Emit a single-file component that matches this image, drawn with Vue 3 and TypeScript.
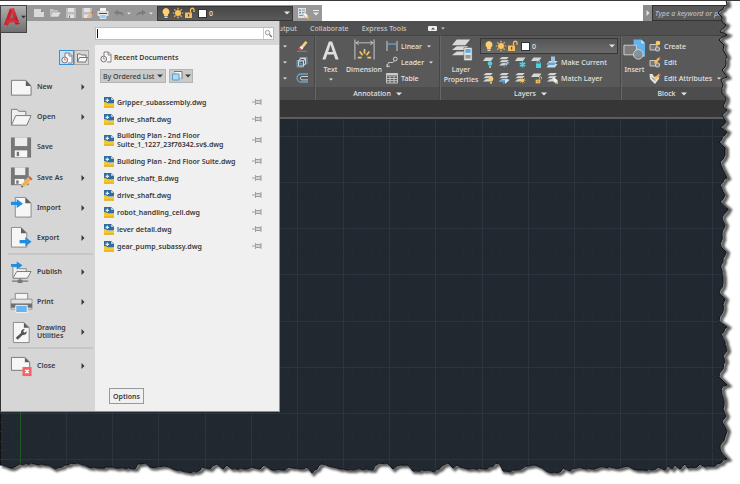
<script setup lang="ts">
import { ref } from 'vue'

interface MenuItem {
  label: string
  icon: string
  sub: boolean
}

const menuGroups: MenuItem[][] = [
  [
    { label: 'New', icon: 'm-new', sub: true },
    { label: 'Open', icon: 'm-open', sub: true },
    { label: 'Save', icon: 'm-save', sub: false },
    { label: 'Save As', icon: 'm-saveas', sub: true },
    { label: 'Import', icon: 'm-import', sub: true },
    { label: 'Export', icon: 'm-export', sub: true },
  ],
  [
    { label: 'Publish', icon: 'm-publish', sub: true },
    { label: 'Print', icon: 'm-print', sub: true },
    { label: 'Drawing Utilities', icon: 'm-utils', sub: true },
  ],
  [{ label: 'Close', icon: 'm-close', sub: true }],
]

const documents: string[] = [
  'Gripper_subassembly.dwg',
  'drive_shaft.dwg',
  'Building Plan - 2nd Floor Suite_1_1227_23f76342.sv$.dwg',
  'Building Plan - 2nd Floor Suite.dwg',
  'drive_shaft_B.dwg',
  'drive_shaft.dwg',
  'robot_handling_cell.dwg',
  'lever detail.dwg',
  'gear_pump_subassy.dwg',
]

const tabs: string[] = ['Output', 'Collaborate', 'Express Tools']
const fileTools: string[] = ['q-new', 'q-open', 'q-save', 'q-saveas', 'q-print']
const fileToolNames: string[] = ['New', 'Open', 'Save', 'Save As', 'Print']

const annotationTools = [
  { label: 'Linear', icon: 'r-linear', arrow: true },
  { label: 'Leader', icon: 'r-leader', arrow: true },
  { label: 'Table', icon: 'r-table', arrow: false },
]
const blockTools = [
  { label: 'Create', icon: 'r-create', arrow: false },
  { label: 'Edit', icon: 'r-edit', arrow: false },
  { label: 'Edit Attributes', icon: 'r-attr', arrow: true },
]
const layerRows = [
  { icons: ['l-off', 'l-iso', 'l-freeze', 'l-lock'], label: 'Make Current', icon: 'l-current' },
  { icons: ['l-on', 'l-uniso', 'l-thaw', 'l-unlock'], label: 'Match Layer', icon: 'l-match' },
]
const modifyIcons = ['r-erase', 'r-box', 'r-offset']

const menuSearch = ref('')
const helpSearch = ref('')

// Drawing grid: one major line every five minor ones
const minorStep = 9.23
const gridX = Array.from({ length: 80 }, (_, i) => ({
  pos: Math.round(20 + (i - 2) * minorStep),
  major: (i - 2) % 5 === 0,
}))
const gridY = Array.from({ length: 40 }, (_, i) => ({
  pos: Math.round(17 + (i - 1) * minorStep),
  major: (i - 1) % 5 === 0,
}))

// Torn paper edge, down the right side and then back along the bottom
const tear: number[][] = [
  [726, 0], [727, 5], [718, 13], [722, 17], [722, 22], [726, 25], [720, 32], [727, 35], [719, 40],
  [724, 45], [723, 50], [727, 57], [725, 67], [722, 70], [727, 77], [721, 80], [723, 85], [722, 93],
  [726, 98], [723, 107], [727, 110], [722, 115], [725, 120], [726, 122], [720, 127], [727, 132],
  [719, 142], [725, 148], [725, 155], [720, 162], [723, 170], [727, 178], [720, 185], [725, 195],
  [720, 202], [728, 209], [722, 218], [725, 225], [722, 235], [721, 247], [726, 252], [721, 265],
  [723, 277], [723, 283], [719, 293], [725, 299], [724, 302], [723, 311], [719, 321], [727, 327],
  [721, 334], [725, 342], [727, 351], [723, 356], [725, 362], [719, 377], [727, 385], [721, 389],
  [724, 401], [723, 409], [726, 416], [722, 421], [727, 431], [725, 437], [720, 446], [721, 452],
  [727, 459], [715, 466], [705, 467], [700, 464], [697, 467], [688, 468], [685, 464], [680, 469],
  [675, 465], [672, 469], [668, 466], [665, 470], [658, 467], [652, 470], [640, 470], [633, 469],
  [627, 466], [620, 468], [600, 467], [595, 469], [577, 468], [570, 471], [563, 468], [558, 473],
  [548, 472], [540, 467], [533, 465], [523, 468], [510, 472], [503, 471], [499, 463], [487, 469],
  [470, 469], [460, 467], [457, 465], [453, 468], [448, 463], [442, 466], [434, 472], [428, 470],
  [413, 471], [408, 465], [397, 466], [393, 469], [387, 463], [378, 464], [373, 470], [357, 469],
  [347, 470], [333, 467], [322, 464], [312, 473], [307, 467], [300, 469], [293, 468], [289, 467],
  [285, 470], [272, 470], [264, 465], [260, 469], [252, 467], [247, 469], [232, 469], [227, 465],
  [223, 469], [217, 464], [210, 469], [202, 467], [197, 472], [187, 472], [173, 469], [165, 466],
  [157, 467], [150, 467], [145, 463], [138, 464], [135, 469], [120, 468], [110, 467], [100, 468],
  [88, 467], [78, 463], [65, 465], [55, 469], [48, 465], [35, 464], [20, 464], [13, 468], [0, 465],
]

// Breaks each stretch of the tear into short ragged steps
function roughen(points: number[][]): string {
  const out: string[] = []
  points.forEach(([x, y], i) => {
    out.push(`${x} ${y}`)
    const next = points[i + 1]
    if (!next) return
    const steps = Math.floor(Math.hypot(next[0] - x, next[1] - y) / 3)
    for (let s = 1; s < steps; s++) {
      const t = s / steps
      const n = ((i * 7 + s * 13) % 5) / 2 - 1
      out.push(`${(x + (next[0] - x) * t + n * 0.6).toFixed(1)} ${(y + (next[1] - y) * t + n * 0.7).toFixed(1)}`)
    }
  })
  return 'M' + out.join('L')
}
const tearLine = roughen(tear)
const paper = tearLine + 'L-20 465L-20 500L760 500L760 -20L726 -20Z'
</script>

<template>
  <div class="page">
    <svg class="defs" aria-hidden="true">
      <defs>
        <linearGradient id="gRed" x1="0" y1="0" x2="1" y2="1">
          <stop offset="0" stop-color="#f0545c" /><stop offset="1" stop-color="#a80f1b" />
        </linearGradient>
        <symbol id="bulb" viewBox="0 0 10 12">
          <path d="M5 1a3.6 3.6 0 0 0-2 6.500V9h4V7.500A3.600 3.600 0 0 0 5 1z" fill="#ffcf70" />
          <path d="M3.500 9.500h3v1.500h-3z" fill="#d8d8d8" />
        </symbol>
        <symbol id="sun" viewBox="0 0 12 12">
          <circle cx="6" cy="6" r="3" fill="#fbc45c" />
          <path d="M6 .8v1.600M6 9.600v1.600M.8 6h1.600M9.600 6h1.600M2.300 2.300l1.200 1.200M8.500 8.500l1.200 1.200M2.300 9.700l1.200-1.200M8.500 3.500l1.200-1.200" stroke="#fbc45c" stroke-width="1.200" />
        </symbol>
        <symbol id="unlock" viewBox="0 0 12 12">
          <path d="M1 5.500h7V11H1z" fill="#f3bd5c" />
          <path d="M6.500 5.500V3a1.700 1.700 0 0 1 3.500 0v2" fill="none" stroke="#f3bd5c" stroke-width="1.300" />
          <path d="M4 7h1.200v2.500H4z" fill="#6b5528" />
        </symbol>
        <symbol id="down" viewBox="0 0 6 4"><path d="M0 .5h6L3 3.500z" fill="currentColor" /></symbol>
        <symbol id="right" viewBox="0 0 4 6"><path d="M.5 0v6l3-3z" fill="currentColor" /></symbol>
        <symbol id="sheets" viewBox="0 0 12 12">
          <path d="M3.500 3.500h8L9 7H1z" fill="#d6d6d6" />
        </symbol>
        <symbol id="stack" viewBox="0 0 12 12">
          <path d="M4 1h7L8.500 3.500H1zM4 4h7L8.500 6.500H1zM4 7h7L8.500 9.500H1z" fill="#d6d6d6" />
          <path d="M1 3.700h7.500L11 1.500M1 6.700h7.500L11 4.500" stroke="#555" stroke-width=".6" fill="none" />
        </symbol>

        <symbol id="q-new" viewBox="0 0 12 12"><path d="M1 2h7l3 3v5H1z" fill="#d9d9d9" /><path d="M8 2v3h3z" fill="#888" /></symbol>
        <symbol id="q-open" viewBox="0 0 12 12"><path d="M1 10V2h3l1 1h4v2" fill="#c2c2c2" /><path d="M1 10l2.500-5H12l-2.500 5z" fill="#dedede" stroke="#919191" stroke-width=".5" /></symbol>
        <symbol id="q-save" viewBox="0 0 12 12"><path d="M1 1h10v10H1z" fill="#bdbdbd" /><path d="M3 1h6v4H3zM3 7.500h6V11H3z" fill="#e3e3e3" /><path d="M4 8.500h1V11H4z" fill="#777" /></symbol>
        <symbol id="q-saveas" viewBox="0 0 12 12"><path d="M1 1h10v10H1z" fill="#bdbdbd" /><path d="M3 1h6v4H3zM3 7.500h5V11H3z" fill="#e3e3e3" /><path d="M6 11l.5-2L10 5.500l1.500 1.500L8 10.500z" fill="#f3b85f" /><path d="M10 5.500l1-1L12 6l-.7 1z" fill="#e85050" /></symbol>
        <symbol id="q-print" viewBox="0 0 12 12"><path d="M3 1h6v3H3z" fill="#f4f4f4" /><path d="M.5 4h11v5H.5z" fill="#dedede" /><path d="M2 6h8v1H2z" fill="#4d4d4d" /><path d="M3 7.500h6v4H3z" fill="#8fd0ff" stroke="#f2f2f2" stroke-width=".7" /></symbol>
        <symbol id="q-undo" viewBox="0 0 12 10"><path d="M1 4.500L5 1.500v2c3.500 0 5.500 1.500 6 4.500-1.500-1.500-3-2-6-2v1.700z" fill="#7c7c7c" /></symbol>
        <symbol id="q-match" viewBox="0 0 12 12"><path d="M1 1h8v10H1z" fill="#e0e0e0" /><path d="M2 2.500h2v1.500H2zM2 5h2v1.500H2z" fill="#4d9ed5" /><path d="M5 3h3M5 5.500h3M2 8.500h4" stroke="#7a7a7a" stroke-width=".8" /><path d="M5.500 6.500L8 5l3.500 4L9 11.500z" fill="#f2f2f2" stroke="#777" stroke-width=".4" /><path d="M9 11.500l2.500-2.500.5 3z" fill="#edba56" /></symbol>

        <symbol id="m-new" viewBox="0 0 24 24"><path d="M1.500 4.500h15l5.500 6v9.500H1.500z" fill="#f6f6f6" stroke="#777" /><path d="M16.500 4.500v6H22z" fill="#5e5e5e" /></symbol>
        <symbol id="m-open" viewBox="0 0 24 24"><path d="M1.500 20V3.500h6l1.500 2h7.500V10" fill="#f0f0f0" stroke="#777" /><path d="M1.500 20l4.500-10h16l-4.500 10z" fill="#f6f6f6" stroke="#777" /></symbol>
        <symbol id="m-save" viewBox="0 0 24 24"><path d="M1 1.500h21v21H1z" fill="#777" /><path d="M5 1.500h13v9H5z" fill="#ececec" /><path d="M5 15h13v7H5z" fill="#f6f6f6" /><path d="M7 16.500h2.500V21H7z" fill="#777" /></symbol>
        <symbol id="m-saveas" viewBox="0 0 24 24"><path d="M1 1.500h18.500v18.500H1z" fill="#777" /><path d="M5 1.500h11v8H5z" fill="#ececec" /><path d="M5 13.500h10V19H5z" fill="#f6f6f6" /><path d="M6.500 15H9v3.500H6.500z" fill="#777" /><path d="M11.500 22.500l1-4 6.500-6.500 3 3-6.500 6.500z" fill="#f0b04a" stroke="#e8e8e8" stroke-width=".6" /><path d="M19 12l1.500-1.500 3 3L22 15z" fill="#ef4f59" /><path d="M11.500 22.500l.7-2.500 1.800 1.800z" fill="#555" /></symbol>
        <symbol id="m-import" viewBox="0 0 24 24"><path d="M5.500 1.500h10.500l6 6v14.500H5.500z" fill="#f6f6f6" stroke="#888" /><path d="M16 1.500v6h6z" fill="#5e5e5e" /><path d="M1 6h6V3l6.500 5L7 12.500v-3H1z" fill="#1f8de0" /></symbol>
        <symbol id="m-export" viewBox="0 0 24 24"><path d="M1.500 1.500h10l6 6V22h-16z" fill="#f6f6f6" stroke="#888" /><path d="M11.500 1.500v6h6z" fill="#5e5e5e" /><path d="M10 14.500h6v-3l6.500 5-6.500 5v-3.500h-6z" fill="#1f8de0" /></symbol>
        <symbol id="m-publish" viewBox="0 0 24 24"><path d="M3 17V6h5l1.500 2H17v3" fill="#eee" stroke="#888" /><path d="M3 18l4-7h15l-4 7z" fill="#f6f6f6" stroke="#777" /><path d="M1 3h6V.5L13 4.500 7 9V6H1z" fill="#1f8de0" /><path d="M2 21h17M10.500 18v3" stroke="#777" stroke-width="1.400" /><path d="M8 19.500h5v3.500H8z" fill="#777" /></symbol>
        <symbol id="m-print" viewBox="0 0 24 24"><path d="M5.500 2.500h13V9h-13z" fill="#f6f6f6" stroke="#888" /><path d="M1 8.500h22V19H1z" fill="#e0e0e0" stroke="#888" stroke-width=".8" /><path d="M1 13h22v4.500H1z" fill="#6f6f6f" /><path d="M6 15h12v7.500H6z" fill="#6cb3ee" stroke="#f4f4f4" /></symbol>
        <symbol id="m-utils" viewBox="0 0 24 24"><path d="M3.500 1.500h11l5.500 5.500v15.500H3.500z" fill="#f6f6f6" stroke="#888" /><path d="M14.500 1.500V7H20z" fill="#5e5e5e" /><path d="M6 17.500l5.500-5a3.300 3.300 0 0 1 4-4l-1.800 2.300 1.500 1.500 2.300-1.500a3.300 3.300 0 0 1-4.300 3.700L8 19.500z" fill="#555" /></symbol>
        <symbol id="m-close" viewBox="0 0 24 24"><path d="M1.500 2.500h14l5 5V16h-19z" fill="#f6f6f6" stroke="#777" /><path d="M15.500 2.500v5h5z" fill="#5e5e5e" /><path d="M13 12.500h9.500V22H13z" fill="#f4636a" /><path d="M16 15.500l3.500 3.500M19.500 15.500L16 19" stroke="#fff" stroke-width="1.500" /></symbol>

        <symbol id="recent" viewBox="0 0 12 12"><path d="M4 5V1h4.500L11 3.500V11H7" fill="#f8f8f8" stroke="#777" stroke-width=".9" /><path d="M8 1v3h3" fill="none" stroke="#777" stroke-width=".9" /><circle cx="3.700" cy="8" r="2.900" fill="#f4f4f4" stroke="#777" /><path d="M3.700 6.200V8h1.600" fill="none" stroke="#d55" stroke-width=".8" /></symbol>
        <symbol id="folder" viewBox="0 0 12 12"><path d="M1.500 10V2h3l1 1H10v2" fill="#f2f2f2" stroke="#666" stroke-width=".9" /><path d="M1.500 10l2-4.500h8l-2 4.500z" fill="#f8f8f8" stroke="#666" stroke-width=".9" /></symbol>
        <symbol id="views" viewBox="0 0 12 12"><path d="M3 1.500h8V9" fill="#f4f4f4" stroke="#777" /><path d="M1.500 4h6.500v6H1.500z" fill="#aedcf7" stroke="#5b9cc4" /></symbol>
        <symbol id="glass" viewBox="0 0 10 10"><circle cx="4" cy="4" r="2.500" fill="#eef4f8" stroke="#9a9a9a" /><path d="M6 6l2.800 2.800" stroke="#777" stroke-width="1.500" /></symbol>
        <symbol id="dwg" viewBox="0 0 12 12"><path d="M1 1h7l3 3v3.500H1z" fill="#2d6da3" /><path d="M8 1v3h3z" fill="#dbe6ef" stroke="#557" stroke-width=".3" /><path d="M1 6c3 0 4 2 5.500 2S9 7.500 11 7.500v4H1z" fill="#f6c828" /><path d="M2.500 4.300h3.600M4.300 2.500v3.600" stroke="#dcebf7" stroke-width="1.200" /><path d="M1 10.700h10v.8H1z" fill="#c69612" /></symbol>
        <symbol id="pin" viewBox="0 0 10 8"><path d="M0 4h3M3.500 1v6M3.500 2.500h5v3h-5M9 1v6" fill="none" stroke="#a0a0a0" /><path d="M4 4h4.500" stroke="#bbb" /></symbol>

        <symbol id="r-erase" viewBox="0 0 12 12"><path d="M3.500 8L9.500 1l2 1.500-5.500 7z" fill="#f8cf83" /><path d="M3.500 8L5 6l2.300 2L6 9.800z" fill="#f6f6f6" /><path d="M2 8.500l1.500-1L6 9.500l-1.500 1z" fill="#e74d4d" /><path d="M1 11.300h10" stroke="#5f9fcc" stroke-width=".8" /></symbol>
        <symbol id="r-box" viewBox="0 0 12 12"><path d="M1 4.500h6.500V11H1zM4 1.500h7V8H4z" fill="none" stroke="#66a4cf" /><path d="M2.500 5h5v5h-5zM2.500 5l2-2.500h5l-2 2.500M9.500 2.500v5l-2 2.500" fill="none" stroke="#d7d7d7" /></symbol>
        <symbol id="r-offset" viewBox="0 0 12 12"><path d="M12 2H5a4 4 0 0 0 0 8h7" fill="none" stroke="#66a4cf" stroke-width="1.300" /><path d="M12 4.500H6a1.700 1.700 0 0 0 0 3.400h6" fill="none" stroke="#d0d0d0" /></symbol>
        <symbol id="r-text" viewBox="0 0 24 24"><path d="M3.500 22L10.300 3h3.400l6.800 19h-3.300l-1.800-5.300H8.600L6.800 22zM9.500 14h5L12 6.500z" fill="#dedede" /></symbol>
        <symbol id="r-dim" viewBox="0 0 24 24"><path d="M2 1v21M22 1v21" stroke="#cfcfcf" /><path d="M3 4.500h18M6 2.500l-3 2 3 2M18 2.500l3 2-3 2" fill="none" stroke="#cfcfcf" stroke-width=".9" /><path d="M5 20h4M15 20h4M7 13.500l3 4M17 13.500l-3 4M12 11v5" stroke="#f6c364" stroke-width="1.800" /></symbol>
        <symbol id="r-linear" viewBox="0 0 12 12"><path d="M1 1v10M11 1v10" stroke="#cfcfcf" /><path d="M1.500 4h9" stroke="#5aa9e0" stroke-width="1.300" /></symbol>
        <symbol id="r-leader" viewBox="0 0 12 12"><path d="M1 11l1.500-4.500H7L9 4M1 8v3l3-1" fill="none" stroke="#cfcfcf" stroke-width=".9" /><circle cx="9.300" cy="3" r="1.900" fill="none" stroke="#cfcfcf" /></symbol>
        <symbol id="r-table" viewBox="0 0 12 12"><path d="M.5 1.500h11v9.500H.5zM.5 4h11M.5 6.500h11M.5 8.700h11M4 4v7M8 4v7" fill="none" stroke="#cfcfcf" stroke-width=".9" /><path d="M.5 1.500h11V3H.5z" fill="#cfcfcf" /></symbol>
        <symbol id="r-layers" viewBox="0 0 24 24"><path d="M7 1h14l-5 6H2zM7 8h12l-4 4H2zM7 13.500h10l-3 4H2z" fill="#d9d9d9" /><path d="M14.500 9.500h8.500V23h-8.500z" fill="#e8e8e8" stroke="#666" stroke-width=".6" /><path d="M16 11h5.500v4H16z" fill="#58aee8" /><path d="M16 17h5.500v4H16z" fill="#999" /></symbol>
        <symbol id="l-off" viewBox="0 0 12 12"><use href="#sheets" y="-2" width="12" height="12" /><circle cx="8" cy="7.500" r="2.300" fill="#4ed0e0" /><path d="M7.300 10h1.500v2H7.300z" fill="#d0d0d0" /></symbol>
        <symbol id="l-iso" viewBox="0 0 12 12"><use href="#stack" width="12" height="12" /><path d="M5 11l5.500-6 1.500 1.500-5.500 5z" fill="#4b86b5" /><path d="M8 9l2-3" stroke="#e6e6e6" /></symbol>
        <symbol id="l-uniso" viewBox="0 0 12 12"><use href="#stack" width="12" height="12" /><path d="M1 9h6M5 11.500l4-5" stroke="#4b9bd5" stroke-width="1.400" /><path d="M7 12V7l4.500 1z" fill="#e1e1e1" /></symbol>
        <symbol id="l-freeze" viewBox="0 0 12 12"><use href="#sheets" y="-2" width="12" height="12" /><path d="M8.500 5.500v6M5.800 7l5.400 3M5.800 10l5.400-3" stroke="#4ed0e0" stroke-width="1.500" /></symbol>
        <symbol id="l-lock" viewBox="0 0 12 12"><use href="#sheets" y="-2" width="12" height="12" /><path d="M6 7.500h5V12H6z" fill="#4ed0e0" /><path d="M7 7.500V6.500a1.500 1.500 0 0 1 3 0v1" fill="none" stroke="#4ed0e0" /></symbol>
        <symbol id="l-current" viewBox="0 0 12 12"><path d="M3 5h8.500L9 8.500H.5zM3 8h8.500L9 11.500H.5z" fill="#d6d6d6" /><path d="M2 6.500h8l-1.500 2.500h-7z" fill="#58a8e0" /><path d="M5 .5h4v4l-2 2-2-2z" fill="#9bc3e0" /></symbol>
        <symbol id="l-on" viewBox="0 0 12 12"><use href="#stack" width="12" height="12" /><circle cx="9" cy="7" r="2.400" fill="#ffcb62" /><path d="M8.300 9.700h1.500v2H8.300z" fill="#e0e0e0" /></symbol>
        <symbol id="l-thaw" viewBox="0 0 12 12"><use href="#stack" width="12" height="12" /><use href="#sun" x="5" y="5" width="7" height="7" /></symbol>
        <symbol id="l-unlock" viewBox="0 0 12 12"><use href="#sheets" y="-2" width="12" height="12" /><use href="#unlock" x="5" y="4" width="8" height="8" /></symbol>
        <symbol id="l-match" viewBox="0 0 12 12"><use href="#stack" width="12" height="12" /><path d="M6 7l2-2 4 4-2.500 2.500z" fill="#eee" /><path d="M9.500 11.500L12 9v3z" fill="#f0b850" /></symbol>
        <symbol id="r-insert" viewBox="0 0 24 24"><path d="M11 1h8l4 4v14H11z" fill="#5fb6ee" /><path d="M19 1v4h4z" fill="#c6e6fa" /><path d="M1 7h13v10H1z" fill="#7c7c7c" stroke="#cfcfcf" /><circle cx="16" cy="16.500" r="5" fill="#8a8a8a" fill-opacity=".8" stroke="#d5d5d5" /></symbol>
        <symbol id="r-create" viewBox="0 0 12 12"><path d="M1 4.500h7V10H1z" fill="#777" stroke="#d5d5d5" stroke-width=".9" /><circle cx="8.500" cy="9" r="2.200" fill="#8a8a8a" stroke="#d5d5d5" stroke-width=".9" /><circle cx="9" cy="3" r="2.300" fill="#ffc95e" /></symbol>
        <symbol id="r-edit" viewBox="0 0 12 12"><path d="M1 4.500h7V10H1z" fill="#777" stroke="#d5d5d5" stroke-width=".9" /><circle cx="8.500" cy="9" r="2.200" fill="#8a8a8a" stroke="#d5d5d5" stroke-width=".9" /><path d="M5 7.500l.5-2L9.500 1.500l1.500 1.500-4 4z" fill="#f5bd5b" /><path d="M9.500 1.500L10.500.5 12 2l-1 1z" fill="#ef4f59" /></symbol>
        <symbol id="r-attr" viewBox="0 0 12 12"><path d="M.5 2h3l1.500 3L8 4l2.500 2-4.500 6L1 7z" fill="#e4e4e4" /><path d="M3 5.500l3 3" stroke="#666" /><path d="M5 8l.5-2L9.500 2l1.500 1.500-4 4z" fill="#f5bd5b" /><path d="M9.500 2l1-1L12 2.500l-1 1z" fill="#ef4f59" /></symbol>
      </defs>
    </svg>

    <header class="titlebar">
      <div class="quick">
        <button v-for="(t, i) in fileTools" :key="t" class="tool" :aria-label="fileToolNames[i]">
          <svg class="i12"><use :href="'#' + t" /></svg>
        </button>
        <button class="tool" aria-label="Undo"><svg class="i12"><use href="#q-undo" /></svg></button>
        <button class="drop" aria-label="Undo history"><svg class="arrow small"><use href="#down" /></svg></button>
        <button class="tool flip" aria-label="Redo"><svg class="i12"><use href="#q-undo" /></svg></button>
        <button class="drop" aria-label="Redo history"><svg class="arrow small"><use href="#down" /></svg></button>
        <label class="layerbox quickbox">
          <svg class="i12"><use href="#bulb" /></svg>
          <svg class="i12"><use href="#sun" /></svg>
          <svg class="i12"><use href="#unlock" /></svg>
          <span class="swatch"></span>
          <select aria-label="Current layer"><option>0</option></select>
          <svg class="arrow"><use href="#down" /></svg>
        </label>
        <button class="tool" aria-label="Match Properties"><svg class="i12"><use href="#q-match" /></svg></button>
        <button class="custom" aria-label="Customize"><span></span><svg class="arrow"><use href="#down" /></svg></button>
      </div>
      <div class="help">
        <button aria-label="Expand search"><svg class="caret"><use href="#right" /></svg></button>
        <input v-model="helpSearch" type="text" aria-label="Search help" placeholder="Type a keyword or phrase" />
      </div>
    </header>

    <nav class="tabs">
      <a v-for="t in tabs" :key="t" href="#">{{ t }}</a>
      <button class="ribbontoggle" aria-label="Minimize ribbon"><span><svg class="arrow tiny"><use href="#down" /></svg></span><svg class="arrow small"><use href="#down" /></svg></button>
    </nav>

    <section class="ribbon">
      <div class="panel modify">
        <div class="body">
          <div class="col">
            <button v-for="m in modifyIcons" :key="m" class="row" :aria-label="m.slice(2)">
              <svg class="arrow small"><use href="#down" /></svg>
              <svg class="i12"><use :href="'#' + m" /></svg>
            </button>
          </div>
        </div>
        <div class="title"></div>
      </div>
      <div class="panel annotation">
        <div class="body">
          <button class="big text"><svg><use href="#r-text" /></svg><span>Text</span><svg class="arrow small"><use href="#down" /></svg></button>
          <button class="big"><svg><use href="#r-dim" /></svg><span>Dimension</span></button>
          <div class="col">
            <button v-for="t in annotationTools" :key="t.label" class="row">
              <svg class="i12"><use :href="'#' + t.icon" /></svg>{{ t.label }}
              <svg v-if="t.arrow" class="arrow small"><use href="#down" /></svg>
            </button>
          </div>
        </div>
        <button class="title">Annotation<svg class="arrow"><use href="#down" /></svg></button>
      </div>
      <div class="panel layers">
        <div class="body">
          <button class="big props"><svg><use href="#r-layers" /></svg><span>Layer Properties</span></button>
          <div class="col grow">
            <label class="layerbox">
              <svg class="i12"><use href="#bulb" /></svg>
              <svg class="i12"><use href="#sun" /></svg>
              <svg class="i12"><use href="#unlock" /></svg>
              <span class="swatch"></span>
              <select aria-label="Layer"><option>0</option></select>
              <svg class="arrow"><use href="#down" /></svg>
            </label>
            <div v-for="r in layerRows" :key="r.label" class="row tools">
              <button v-for="i in r.icons" :key="i" :aria-label="i.slice(2)"><svg class="i12"><use :href="'#' + i" /></svg></button>
              <button class="row"><svg class="i12"><use :href="'#' + r.icon" /></svg>{{ r.label }}</button>
            </div>
          </div>
        </div>
        <button class="title">Layers<svg class="arrow"><use href="#down" /></svg></button>
      </div>
      <div class="panel block">
        <div class="body">
          <button class="big"><svg><use href="#r-insert" /></svg><span>Insert</span></button>
          <div class="col">
            <button v-for="t in blockTools" :key="t.label" class="row">
              <svg class="i12"><use :href="'#' + t.icon" /></svg>{{ t.label }}
              <svg v-if="t.arrow" class="arrow small"><use href="#down" /></svg>
            </button>
          </div>
        </div>
        <button class="title">Block<svg class="arrow"><use href="#down" /></svg></button>
      </div>
    </section>

    <div class="filetabs"></div>

    <main class="canvas">
      <svg class="grid" aria-hidden="true">
        <rect v-for="g in gridX" :key="'x' + g.pos" :x="g.pos" y="0" width="1" height="100%" :fill="g.major ? '#2c3440' : '#232a33'" />
        <rect v-for="g in gridY" :key="'y' + g.pos" x="0" :y="g.pos" width="100%" height="1" :fill="g.major ? '#2c3440' : '#232a33'" />
        <rect x="20" y="0" width="1" height="100%" fill="#1f5a25" />
      </svg>
    </main>

    <aside class="appmenu">
      <div class="left">
        <div class="toggles">
          <button class="on" aria-label="Recent Documents"><svg class="i12"><use href="#recent" /></svg></button>
          <button aria-label="Open Documents"><svg class="i12"><use href="#folder" /></svg></button>
        </div>
        <div v-for="(g, gi) in menuGroups" :key="gi" class="group" :class="'g' + g.length">
          <button v-for="m in g" :key="m.label" class="item">
            <svg class="i24"><use :href="'#' + m.icon" /></svg>
            <span>{{ m.label }}</span>
            <svg v-if="m.sub" class="caret"><use href="#right" /></svg>
          </button>
        </div>
      </div>
      <div class="rightcol">
        <div class="search">
          <span class="cursor"></span>
          <input v-model="menuSearch" type="text" aria-label="Search commands" />
          <button aria-label="Search"><svg class="i10"><use href="#glass" /></svg></button>
        </div>
        <div class="docs">
          <h2><svg class="i12"><use href="#recent" /></svg>Recent Documents</h2>
          <div class="filters">
            <label class="picker">
              <select aria-label="Sort order"><option>By Ordered List</option></select>
              <svg class="arrow"><use href="#down" /></svg>
            </label>
            <button class="picker" aria-label="Icon size"><svg class="i12"><use href="#views" /></svg><svg class="arrow"><use href="#down" /></svg></button>
          </div>
          <ul>
            <li v-for="(d, i) in documents" :key="i">
              <svg class="i12"><use href="#dwg" /></svg>
              <a href="#">{{ d }}</a>
              <button aria-label="Pin"><svg class="pin"><use href="#pin" /></svg></button>
            </li>
          </ul>
          <button class="options">Options</button>
        </div>
      </div>
    </aside>

    <button class="appbutton" aria-label="Application menu">
      <svg class="logo" viewBox="0 0 18 20">
        <path d="M1 18L7 1.500l4-.5 5.500 16-4 .8-1.300-3.500-5 .8L5 18.500z" fill="url(#gRed)" />
        <path d="M7 11l1.800-5.500L10.500 11z" fill="#777" />
        <path d="M7 1.500L9 4 5 15.500l-4 2.500z" fill="#c8202c" />
        <path d="M3 14c5-2.500 9-2 13 1l.5 2c-4-2.500-8-2.500-12 0z" fill="#d9303b" />
      </svg>
      <svg class="arrow"><use href="#down" /></svg>
    </button>

    <svg class="torn" viewBox="0 0 740 484" preserveAspectRatio="none" aria-hidden="true">
      <defs>
        <clipPath id="outside"><path :d="paper" /></clipPath>
        <filter id="soft" x="-5%" y="-5%" width="110%" height="110%"><feGaussianBlur stdDeviation="0.9" /></filter>
      </defs>
      <path :d="paper" fill="#fff" />
      <g clip-path="url(#outside)">
        <path :d="tearLine" fill="none" stroke="#5a5a5a" stroke-width="4" transform="translate(2 1)" filter="url(#soft)" />
      </g>
      <path :d="tearLine" fill="none" stroke="#0d0f12" stroke-width="1" />
    </svg>
  </div>
</template>

<style>
body {
  background: #fff;
}
</style>

<style scoped>
.page {
  position: relative;
  display: flex;
  flex-direction: column;
  min-height: 100vh;
  box-sizing: border-box;
  border-top: 1px solid #3a3a3a;
  overflow: hidden;
  font: 500 7px/9px "Noto Sans", "Open Sans", sans-serif;
  color: #e4e4e4;
  background: #fff;
}
.defs {
  position: absolute;
  width: 0;
  height: 0;
}
button,
input,
select {
  font: inherit;
  color: inherit;
  background: none;
  border: 0;
  margin: 0;
  padding: 0;
  outline: 0;
  border-radius: 0;
}
button {
  display: flex;
  align-items: center;
}
select {
  appearance: none;
  flex: 1;
  min-width: 0;
}
a {
  color: inherit;
  text-decoration: none;
}
svg {
  flex: none;
  display: block;
}
.i10 { width: 9px; height: 9px; }
.i12 { width: 12px; height: 12px; }
.i24 { width: 23px; height: 23px; }
.arrow { width: 6px; height: 4px; }
.arrow.small { width: 4px; height: 3px; }
.arrow.tiny { width: 4px; height: 3px; transform: rotate(180deg); }
.caret { width: 4px; height: 6px; }

.titlebar {
  display: flex;
  justify-content: space-between;
  height: 20px;
  box-sizing: border-box;
  padding-top: 4px;
}
.quick {
  display: flex;
  align-items: center;
  gap: 4px;
  width: 322px;
  box-sizing: border-box;
  padding: 0 3px 0 33px;
  background: #989898;
  color: #e8e8e8;
}
.flip svg { transform: scaleX(-1); }
.drop { margin-left: -2px; }
.layerbox {
  display: flex;
  align-items: center;
  height: 16px;
  box-sizing: border-box;
  padding: 0 2px;
  border: 1px solid #383838;
  background: linear-gradient(#555, #6a6a6a);
}
.quickbox {
  flex: 1;
  height: 15px;
  background: linear-gradient(#474747, #5a5a5a);
}
.swatch {
  width: 9px;
  height: 9px;
  margin: 0 2px 0 2px;
  background: #fff;
  outline: 1px solid #333;
  outline-offset: -1px;
}
.custom {
  flex-direction: column;
  gap: 1px;
}
.custom span {
  width: 6px;
  height: 1px;
  background: #eee;
}
.help {
  display: flex;
  width: 97px;
}
.help button {
  justify-content: center;
  width: 9px;
  background: #8c8c8c;
}
.help input {
  flex: 1;
  min-width: 0;
  padding-left: 2px;
  border: 1px solid #333;
  background: #595959;
}
.help input::placeholder {
  color: #bdbdbd;
  font-style: italic;
  opacity: 1;
}

.tabs {
  display: flex;
  align-items: center;
  gap: 13px;
  height: 14px;
  padding-left: 273px;
  background: #505050;
  color: #c8c8c8;
}
.ribbontoggle {
  gap: 4px;
  margin-left: 9px;
}
.ribbontoggle span {
  display: flex;
  justify-content: center;
  align-items: center;
  width: 9px;
  height: 5px;
  background: #eee;
  color: #444;
  border-radius: 1px;
}
.ribbon {
  display: flex;
  height: 65px;
  background: #474747;
  gap: 1px;
}
.panel {
  display: flex;
  flex-direction: column;
  box-sizing: border-box;
  background: #595959;
  border-top: 1px solid #434343;
  border-left: 1px solid #676767;
}
.body {
  display: flex;
  flex: 1;
  gap: 4px;
  padding-top: 2px;
}
.title {
  display: flex;
  justify-content: center;
  align-items: center;
  gap: 5px;
  height: 13px;
  background: #4d4d4d;
}
.modify { width: 314px; }
.modify .body { justify-content: flex-end; padding-right: 6px; }
.modify .row { gap: 9px; }
.annotation { width: 124px; }
.annotation .body { padding-left: 3px; }
.layers { width: 180px; }
.layers .body { padding: 2px 2px 0 1px; gap: 0; }
.block { flex: 1; }
.block .body { padding-left: 1px; gap: 3px; }
.block .title { padding-right: 18px; }
.big {
  flex-direction: column;
  gap: 3px;
  line-height: 10px;
}
.big svg:first-child {
  width: 23px;
  height: 24px;
}
.big.props { width: 38px; }
.col {
  display: flex;
  flex-direction: column;
}
.grow { flex: 1; min-width: 0; }
.row {
  display: flex;
  align-items: center;
  gap: 3px;
  height: 16px;
  white-space: nowrap;
}
.row .small { margin-left: 2px; }
.tools { gap: 4px; padding-left: 2px; }
.filetabs {
  height: 17px;
  background: #363636;
  border-bottom: 2px solid #5c5c5c;
}
.canvas {
  flex: 1;
  display: flex;
  background: #212830;
  border-left: 1px solid #111;
}
.grid {
  width: 100%;
  height: auto;
  margin-left: -1px;
}

.appmenu {
  position: absolute;
  top: 20px;
  left: 0;
  display: flex;
  width: 280px;
  height: 391px;
  box-sizing: border-box;
  border: solid #8f8f8f;
  border-width: 0 1px 1px 0;
  border-left: 1px solid #333;
  background: #d6d6d6;
  color: #3a3a3a;
  font-weight: 600;
}
.left {
  display: flex;
  flex-direction: column;
  width: 94px;
  box-sizing: border-box;
  padding-top: 29px;
}
.toggles {
  display: flex;
  justify-content: flex-end;
  padding: 0 6px 7px 0;
}
.toggles button {
  width: 15px;
  height: 15px;
  box-sizing: border-box;
  justify-content: center;
  border: 1px solid #a5a5a5;
}
.toggles .on {
  border-color: #3d8fd4;
  background: #c4e2f8;
}
.group {
  display: grid;
  grid-auto-rows: 1fr;
  min-height: 30px;
  margin: 0 2px 0 7px;
}
.group + .group {
  border-top: 2px solid #c6c6c6;
  padding-top: 2px;
}
.g6 { min-height: 181px; }
.g3 { min-height: 90px; }
.item {
  gap: 4px;
  padding: 0 8px 0 2px;
  text-align: left;
  line-height: 8px;
}
.item span { flex: 1; width: 38px; }
.rightcol {
  flex: 1;
  display: flex;
  flex-direction: column;
  min-width: 0;
}
.search {
  display: flex;
  align-items: center;
  height: 13px;
  box-sizing: border-box;
  margin: 6px 5px 5px 0;
  border: 1px solid #bcbcbc;
  background: #fff;
}
.search input { flex: 1; min-width: 0; }
.search button {
  border-left: 1px solid #ccc;
  height: 11px;
}
.cursor {
  width: 1px;
  height: 9px;
  margin-left: 1px;
  background: #111;
}
.docs {
  flex: 1;
  display: flex;
  flex-direction: column;
  padding: 6px 5px 7px 5px;
  background: #f0f0f0;
}
h2 {
  display: flex;
  align-items: center;
  gap: 2px;
  height: 12px;
  margin: 0;
  font: inherit;
}
.filters {
  display: flex;
  gap: 3px;
  margin: 6px 0 10px;
  font-weight: 500;
}
.picker {
  display: flex;
  align-items: center;
  gap: 2px;
  height: 14px;
  box-sizing: border-box;
  padding: 0 1px;
  border: 1px solid #b3b3b3;
  background: #cacaca;
}
label.picker { width: 66px; gap: 0; padding: 0 2px; }
ul {
  flex: 1;
  list-style: none;
  margin: 0;
  padding: 0;
}
li {
  display: flex;
  align-items: center;
  gap: 2px;
  min-height: 17px;
  box-sizing: border-box;
  padding: 4px 12px 3px 3px;
}
li a {
  flex: 1;
  min-width: 0;
  white-space: normal;
}
li .i12 { margin: -1px 0; }
.pin { width: 10px; height: 8px; }
.options {
  align-self: flex-start;
  margin-left: 9px;
  height: 16px;
  padding: 0 3px;
  border: 1px solid #999;
}
.appbutton {
  position: absolute;
  left: 0;
  top: 4px;
  width: 27px;
  height: 28px;
  padding: 0 0 5px 2px;
  border: 1px solid #444;
  box-sizing: border-box;
  background: linear-gradient(#b0b0b0, #707070);
  color: #333;
}
.logo { width: 18px; height: 20px; }
.appbutton .arrow { width: 5px; }
.torn {
  position: absolute;
  inset: -1px 0 0;
  width: 100%;
  height: calc(100% + 1px);
  pointer-events: none;
}
</style>
